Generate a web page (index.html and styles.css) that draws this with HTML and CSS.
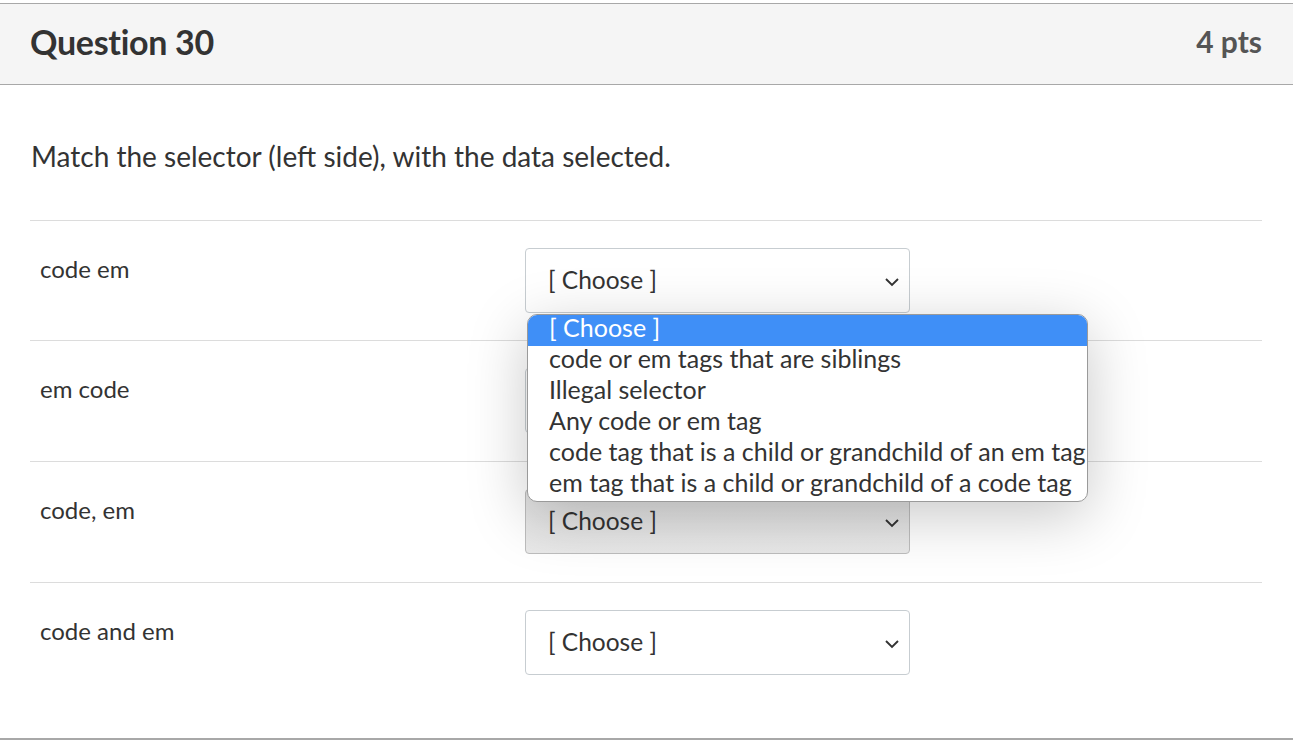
FILE: index.html
```html
<!DOCTYPE html>
<html>
<head>
<meta charset="utf-8">
<link rel="stylesheet" href="styles.css">
</head>
<body>
<div class="question">
  <div class="q-header">
    <h2 class="q-title">Question 30</h2>
    <span class="q-pts">4 pts</span>
  </div>
  <div class="q-body">
    <p class="q-text">Match the selector (left side), with the data selected.</p>
    <div class="rows">
      <div class="row">
        <div class="label">code em</div>
        <div class="select"><span>[ Choose ]</span><svg class="chev" width="16" height="10" viewBox="0 0 16 10"><polyline points="2,2 8,8 14,2" fill="none" stroke="#333" stroke-width="1.9"/></svg></div>
      </div>
      <div class="row">
        <div class="label">em code</div>
        <div class="select covered"><span>[ Choose ]</span><svg class="chev" width="16" height="10" viewBox="0 0 16 10"><polyline points="2,2 8,8 14,2" fill="none" stroke="#333" stroke-width="1.9"/></svg></div>
      </div>
      <div class="row">
        <div class="label">code, em</div>
        <div class="select shaded"><span>[ Choose ]</span><svg class="chev" width="16" height="10" viewBox="0 0 16 10"><polyline points="2,2 8,8 14,2" fill="none" stroke="#333" stroke-width="1.9"/></svg></div>
      </div>
      <div class="row">
        <div class="label">code and em</div>
        <div class="select"><span>[ Choose ]</span><svg class="chev" width="16" height="10" viewBox="0 0 16 10"><polyline points="2,2 8,8 14,2" fill="none" stroke="#333" stroke-width="1.9"/></svg></div>
      </div>
    </div>
  </div>
  <ul class="dropdown">
    <li class="opt active">[ Choose ]</li>
    <li class="opt">code or em tags that are siblings</li>
    <li class="opt">Illegal selector</li>
    <li class="opt">Any code or em tag</li>
    <li class="opt">code tag that is a child or grandchild of an em tag</li>
    <li class="opt">em tag that is a child or grandchild of a code tag</li>
  </ul>
</div>
</body>
</html>
```
FILE: styles.css
```css
html, body {
  margin: 0;
  padding: 0;
  background: #fff;
}
body {
  font-family: Lato, "Noto Sans", sans-serif;
  color: #333;
}
.question {
  position: relative;
  margin-top: 3px;
  border-top: 1px solid #a8a8a8;
  border-bottom: 2px solid #a8a8a8;
  height: 737px;
  box-sizing: border-box;
}
.q-header {
  display: flex;
  justify-content: space-between;
  align-items: center;
  height: 74px;
  padding: 0 31px 6px 30px;
  box-sizing: content-box;
  background: #f5f5f5;
  border-bottom: 1px solid #a8a8a8;
}
.q-title {
  margin: 0;
  font-size: 34px;
  font-weight: 700;
  color: #333;
  letter-spacing: -0.3px;
}
.q-pts {
  font-size: 30px;
  font-weight: 700;
  color: #555;
}
.q-body {
  padding: 0 31px 0 30px;
}
.q-text {
  margin: 0;
  padding: 53px 0 0 1px;
  height: 82px;
  font-size: 28px;
  line-height: 36px;
  color: #333;
  box-sizing: content-box;
}
.row {
  display: flex;
  align-items: flex-start;
  height: 120px;
  border-top: 1px solid #dcdcdc;
  box-sizing: content-box;
}
.row:first-child {
  height: 119px;
}
.label {
  width: 485px;
  padding: 33px 0 0 10px;
  font-size: 24px;
  line-height: 30px;
  color: #333;
}
.select {
  margin-top: 27px;
  width: 385px;
  height: 65px;
  box-sizing: border-box;
  border: 1px solid #c7cdd1;
  border-radius: 4px;
  background: #fff;
  display: flex;
  align-items: center;
  justify-content: space-between;
  padding: 0 9px 3px 22px;
  font-size: 24.5px;
  color: #333;
}
.select.covered span {
  visibility: hidden;
}
.select.shaded {
  background: linear-gradient(#e2e2e2, #e9e9e9);
  border-color: #bdbdbd;
}
.chev {
  margin-top: 6px;
}
.dropdown {
  position: absolute;
  left: 527px;
  top: 310px;
  width: 561px;
  margin: 0;
  padding: 0;
  list-style: none;
  background: #fff;
  border: 1px solid #9a9a9a;
  border-radius: 10px;
  box-sizing: border-box;
  box-shadow: 0 14px 60px rgba(0, 0, 0, 0.22);
}
.opt {
  height: 31px;
  line-height: 25px;
  padding-left: 21px;
  font-size: 25px;
  color: #333;
  white-space: nowrap;
}
.opt.active {
  background: #3f8ff7;
  color: #fff;
  border-radius: 9px 9px 0 0;
}
```
